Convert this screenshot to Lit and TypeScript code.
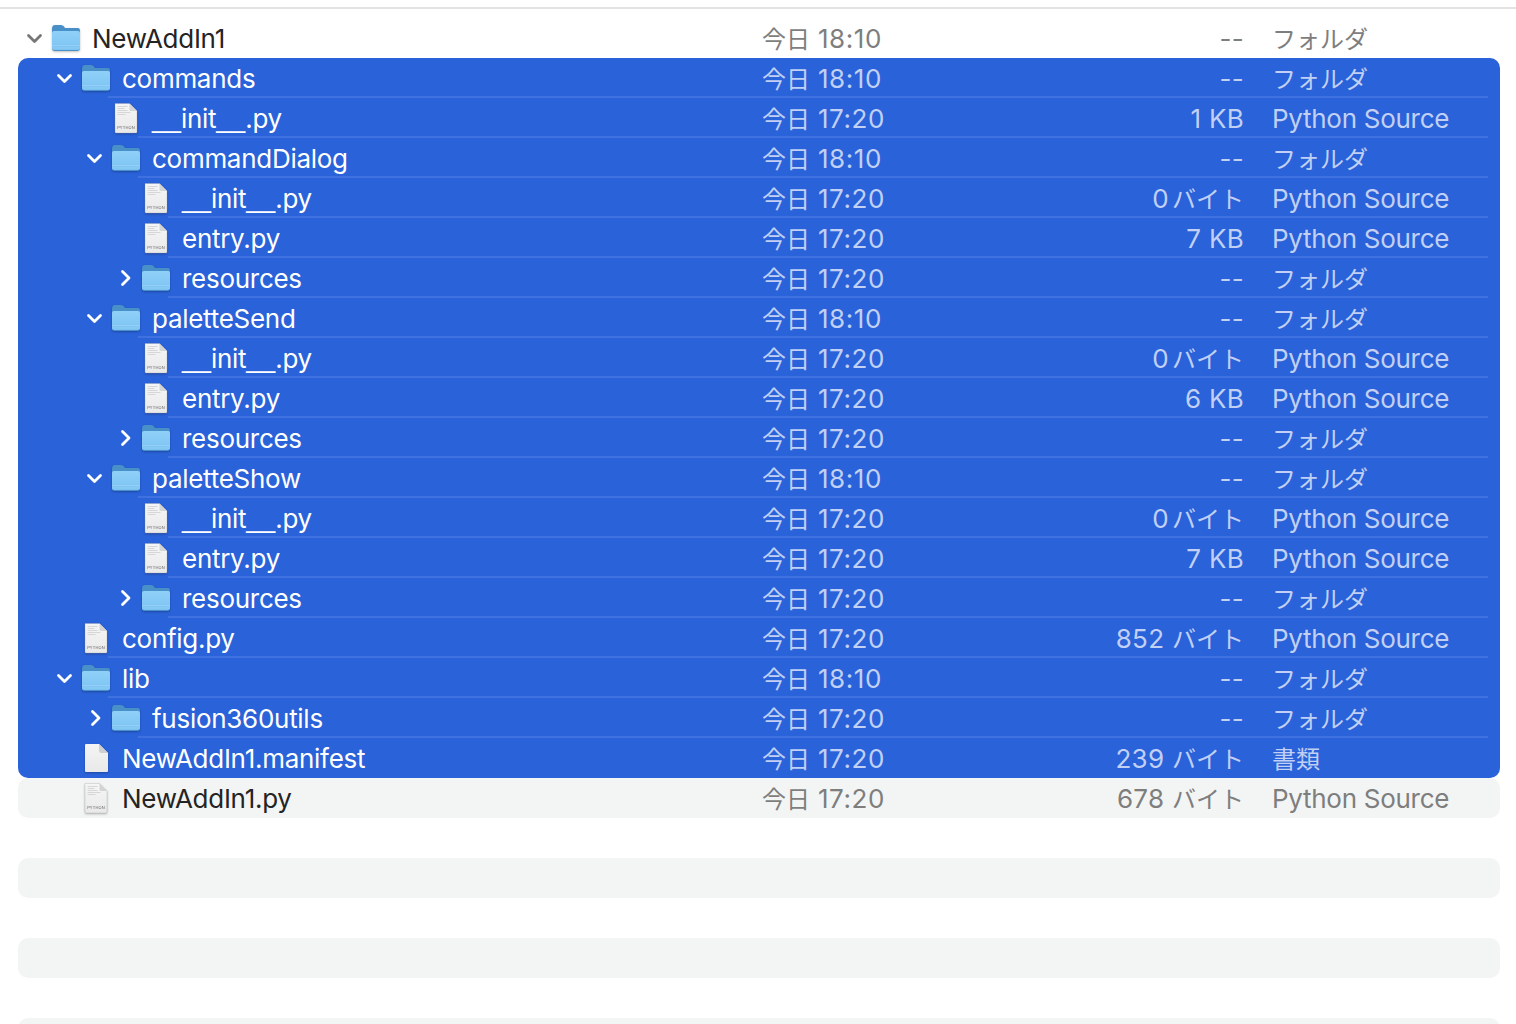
import { LitElement, html, css, svg, nothing } from "lit";
import { customElement } from "lit/decorators.js";

type Kind = "folder" | "py" | "doc";
interface Row {
  name: string;
  depth: number;
  kind: Kind;
  open?: boolean;
  date: string;
  size: string;
  type: string;
}

const F = "フォルダ";
const P = "Python Source";
const D = "今日 18:10";
const E = "今日 17:20";
const folder = (name: string, depth: number, date: string, open = true): Row => ({ name, depth, kind: "folder", open, date, size: "--", type: F });
const py = (name: string, depth: number, size: string): Row => ({ name, depth, kind: "py", date: E, size, type: P });

const head: Row = folder("NewAddIn1", 0, D);
const selected: Row[] = [
  folder("commands", 1, D),
  py("__init__.py", 2, "1 KB"),
  folder("commandDialog", 2, D),
  py("__init__.py", 3, "0バイト"),
  py("entry.py", 3, "7 KB"),
  folder("resources", 3, E, false),
  folder("paletteSend", 2, D),
  py("__init__.py", 3, "0バイト"),
  py("entry.py", 3, "6 KB"),
  folder("resources", 3, E, false),
  folder("paletteShow", 2, D),
  py("__init__.py", 3, "0バイト"),
  py("entry.py", 3, "7 KB"),
  folder("resources", 3, E, false),
  py("config.py", 1, "852 バイト"),
  folder("lib", 1, D),
  folder("fusion360utils", 2, E, false),
  { name: "NewAddIn1.manifest", depth: 1, kind: "doc", date: E, size: "239 バイト", type: "書類" },
];
const last: Row = py("NewAddIn1.py", 1, "678 バイト");

/* Splits a label into runs so CJK glyphs and underscores get the metrics the reference shows. */
const runs = (text: string) =>
  text.split(/([\u3000-\u9fff\uff00-\uffef]+|_+)/).map((part, i, all) =>
    /^_/.test(part)
      ? html`<span class="us">${part}</span>`
      : /^[\u3000-\u9fff\uff00-\uffef]/.test(part)
        ? html`<span class="cjk">${part}</span>`
        : /\d$/.test(part) && all[i + 1]
          ? html`<span class="abut">${part}</span>`
          : part,
  );

const folderIcon = html`<svg class="folder" width="30" height="28" viewBox="0 0 30 28">
  <defs>
    <linearGradient id="fb" x1="0" y1="0" x2="0" y2="1">
      <stop offset="0" stop-color="#8fd0f8" />
      <stop offset="1" stop-color="#7cc3f2" />
    </linearGradient>
  </defs>
  <path d="M1 5 Q1 1 4 1 H10 Q12 1 13 2.500 L14 4 H27 Q29 4 29 7 V24 Q29 27 26 27 H4 Q1 27 1 24 Z" fill="#4a90c8" />
  <path d="M1 9 Q1 7 3 7 H27 Q29 7 29 9 V24 Q29 26 27 26 H3 Q1 26 1 24 Z" fill="url(#fb)" />
  <rect x="1" y="21" width="28" height="1" fill="#9bd3f6" opacity=".7" />
  <rect x="1" y="23.500" width="28" height="1" fill="#9bd3f6" opacity=".5" />
</svg>`;

const pyIcon = html`<svg class="file" width="26" height="32" viewBox="0 0 26 32">
  <defs>
    <linearGradient id="pg" x1="0" y1="0" x2="0" y2="1">
      <stop offset="0" stop-color="#f6f6f6" />
      <stop offset="1" stop-color="#e9e9e9" />
    </linearGradient>
  </defs>
  <path d="M2 1.500 H16.500 L24 9 V30 Q24 31 23 31 H3 Q2 31 2 30 Z" fill="url(#pg)" stroke="#9a9a9a" stroke-opacity=".45" stroke-width=".6" />
  <path d="M16.500 1.500 V7.500 Q16.500 9 18 9 H24 Z" fill="#d4d4d4" />
  <g fill="#d6d6d6">
    <rect x="4.500" y="4" width="10" height="1" />
    <rect x="4.500" y="6" width="7" height="1" />
    <rect x="4.500" y="8" width="10" height="1" />
    <rect x="4.500" y="10" width="13" height="1" />
    <rect x="4.500" y="12" width="8" height="1" />
  </g>
  <text class="pytxt" x="13" y="27" text-anchor="middle">PYTHON</text>
</svg>`;

const docIcon = html`<svg class="file" width="26" height="32" viewBox="0 0 26 32">
  <defs>
    <linearGradient id="dg" x1="0" y1="0" x2="0" y2="1">
      <stop offset="0" stop-color="#f4f4f4" />
      <stop offset="1" stop-color="#e9e9e9" />
    </linearGradient>
  </defs>
  <path d="M2 3 Q2 2 3 2 H16 L25 11 V29 Q25 30 24 30 H3 Q2 30 2 29 Z" fill="url(#dg)" />
  <path d="M16 2 V9 Q16 11 18 11 H25 Z" fill="#cfcfcf" />
</svg>`;

const chevronDown = svg`<path d="M4.500 7.500 L10.500 13.500 L16.500 7.500" fill="none" stroke="currentColor" stroke-width="2.800" stroke-linecap="round" stroke-linejoin="round" />`;
const chevronRight = svg`<path d="M8.500 3.500 L15 10 L8.500 16.500" fill="none" stroke="currentColor" stroke-width="2.800" stroke-linecap="round" stroke-linejoin="round" />`;

@customElement("app-root")
export class AppRoot extends LitElement {
  static styles = css`
    :host {
      display: block;
      height: 1024px;
      overflow: hidden;
      background: #fff;
      font-family: "Inter", "Noto Sans CJK JP", sans-serif;
      font-size: 26px;
      letter-spacing: -0.28px;
      color: #242424;
    }
    .topline {
      height: 2px;
      margin-top: 7px;
      background: #e3e3e3;
    }
    .list {
      padding: 9px 16px 0 18px;
    }
    .row {
      position: relative;
      display: grid;
      grid-template-columns: 744px 240px 242px 1fr;
      grid-template-rows: 40px;
      align-items: start;
      height: 40px;
      color: #7e7e7e;
      line-height: 42px;
      white-space: nowrap;
    }
    .name {
      display: flex;
      align-items: center;
      height: 40px;
      color: #242424;
    }
    .label {
      align-self: flex-start;
    }
    .date {
      letter-spacing: 0.6px;
    }
    .size {
      text-align: right;
      letter-spacing: 0.3px;
    }
    .cjk {
      font-size: 24px;
      letter-spacing: 0;
    }
    .abut {
      padding-right: 3px;
    }
    .us {
      font-family: "Liberation Sans", sans-serif;
      letter-spacing: 0;
    }
    .chev {
      flex: none;
      width: 20px;
      height: 20px;
      margin-right: 7px;
      color: #767676;
    }
    .chev svg {
      display: block;
    }
    .slot {
      flex: none;
      display: flex;
      justify-content: center;
      align-items: center;
      width: 30px;
      height: 40px;
      margin-right: 11px;
    }
    .folder,
    .file {
      display: block;
      filter: drop-shadow(0 1px 1px rgba(0, 0, 0, 0.25));
    }
    .pytxt {
      font-family: "Inter", sans-serif;
      font-size: 4px;
      letter-spacing: 0.1px;
      fill: #666;
    }
    .type {
      padding-left: 28px;
    }
    .sel {
      border-radius: 10px;
      background: #2a62d9;
    }
    .sel .row {
      color: #c1d0f4;
    }
    .sel .name,
    .sel .chev {
      color: #fff;
    }
    .sel .row:not(:last-child)::after {
      content: "";
      position: absolute;
      right: 12px;
      bottom: 0;
      left: var(--sep);
      height: 2px;
      background: #3f72e0;
    }
    .stripe {
      border-radius: 10px;
      background: #f3f5f4;
    }
    .empty,
    .gap {
      height: 40px;
    }
  `;

  private renderRow(r: Row) {
    const pad = 6 + 30 * r.depth;
    const icon = r.kind === "folder" ? folderIcon : r.kind === "py" ? pyIcon : docIcon;
    return html`<div class="row" style="--sep:${60 + 30 * r.depth}px">
      <div class="name" style="padding-left:${pad}px">
        <span class="chev">
          ${r.kind === "folder"
            ? html`<svg width="20" height="20" viewBox="0 0 20 20">${r.open ? chevronDown : chevronRight}</svg>`
            : nothing}
        </span>
        <span class="slot">${icon}</span>
        <span class="label">${runs(r.name)}</span>
      </div>
      <div class="date">${runs(r.date)}</div>
      <div class="size">${runs(r.size)}</div>
      <div class="type">${runs(r.type)}</div>
    </div>`;
  }

  render() {
    return html`<div class="topline"></div>
      <div class="list">
        ${this.renderRow(head)}
        <div class="sel">${selected.map((r) => this.renderRow(r))}</div>
        <div class="stripe">${this.renderRow(last)}</div>
        <div class="gap"></div>
        <div class="stripe empty"></div>
        <div class="gap"></div>
        <div class="stripe empty"></div>
        <div class="gap"></div>
        <div class="stripe empty"></div>
      </div>`;
  }
}
